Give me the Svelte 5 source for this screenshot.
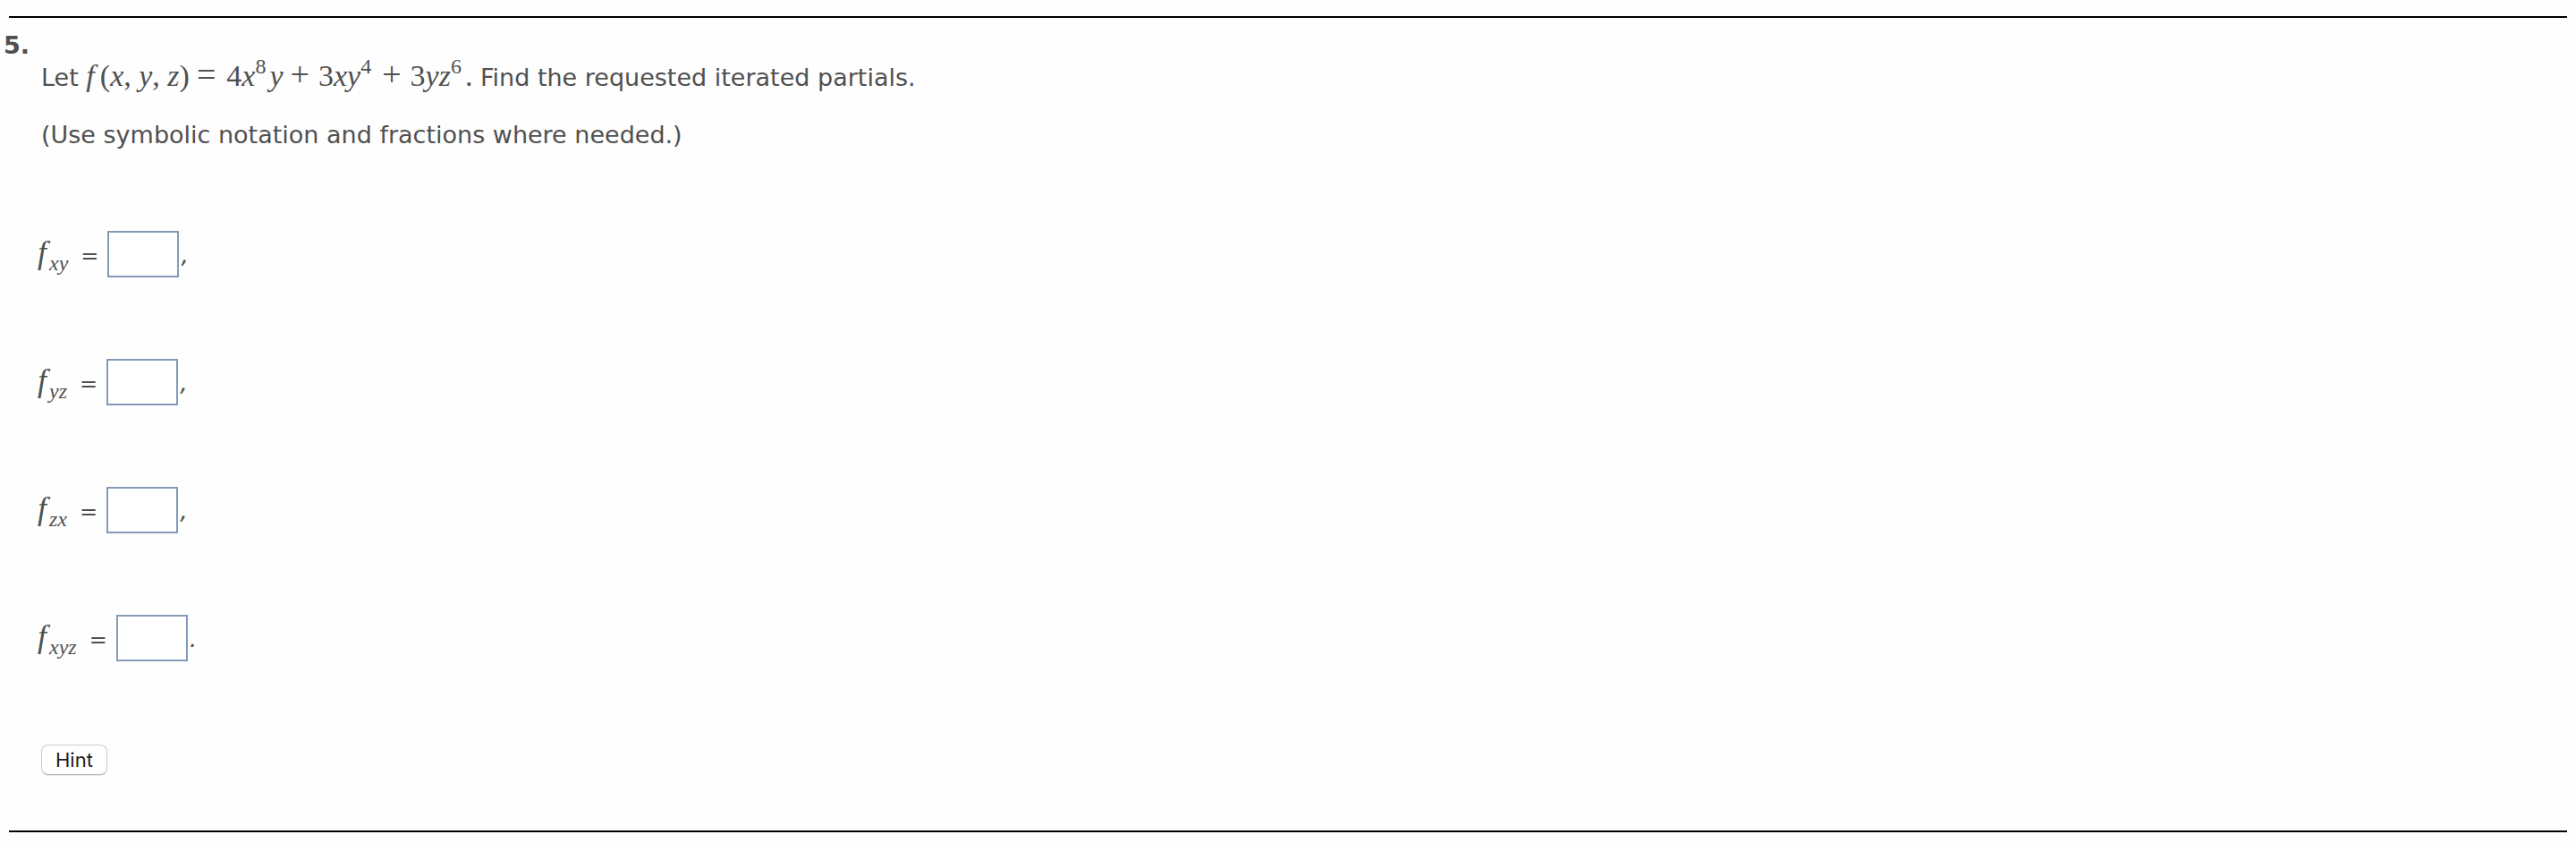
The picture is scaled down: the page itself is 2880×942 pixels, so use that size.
<script>
  let answers = $state([
    { id: 'fxy', sub: 'xy', end: ',', value: '' },
    { id: 'fyz', sub: 'yz', end: ',', value: '' },
    { id: 'fzx', sub: 'zx', end: ',', value: '' },
    { id: 'fxyz', sub: 'xyz', end: '.', value: '' }
  ]);
</script>

<main>
  <section class="question">
    <h2>5.</h2>
    <div class="content">
      <p class="prompt">
        Let <span class="math"><i class="fn">f</i><span class="args">(<i>x</i>, <i>y</i>, <i>z</i>)</span><span class="rel">=</span>4<i>x</i><sup>8</sup><i>y</i><span class="op">+</span>3<i>xy</i><sup>4</sup><span class="op">+</span>3<i>yz</i><sup>6</sup>.</span> Find the requested iterated partials.
      </p>
      <p class="note">(Use symbolic notation and fractions where needed.)</p>

      <div class="answers">
        {#each answers as answer}
          <div class="answer">
            <label for={answer.id}><i class="f">f</i><i class="sub">{answer.sub}</i><span class="eq">=</span></label>
            <input id={answer.id} type="text" bind:value={answer.value} />
            <em class="end">{answer.end}</em>
          </div>
        {/each}
      </div>

      <button type="button">Hint</button>
    </div>
  </section>
</main>

<style>
  :global(body) {
    margin: 0;
    background: #fefefe;
  }
  main {
    padding: 18px 10px 12px;
    font-family: Verdana, "DejaVu Sans", sans-serif;
    font-size: 27px;
    color: #505050;
  }
  .question {
    border-top: 2px solid #000;
    border-bottom: 2px solid #000;
    padding: 16px 0 62px;
  }
  h2 {
    margin: 0 0 3px -6px;
    font-size: 27px;
    line-height: 30px;
  }
  .content {
    padding-left: 36px;
  }
  p {
    margin: 0;
    line-height: 36px;
    white-space: nowrap;
  }
  .note {
    margin-top: 28px;
  }
  .math {
    font-family: "Liberation Serif", serif;
    font-size: 34px;
    line-height: 0;
  }
  .fn {
    margin-right: 6px;
  }
  .rel,
  .op {
    margin: 0 10px 0 8px;
    font-size: 38px;
  }
  .rel {
    margin-right: 12px;
  }
  sup {
    margin-right: 4px;
    font-size: 24px;
    line-height: 0;
    vertical-align: 14px;
  }
  .answers {
    display: flex;
    flex-direction: column;
    gap: 91px;
    margin: 89px 0 93px -4px;
  }
  .answer {
    display: flex;
    align-items: baseline;
    height: 52px;
  }
  label {
    white-space: nowrap;
  }
  .f,
  .sub {
    font-family: "Liberation Serif", serif;
    font-size: 36px;
    line-height: 40px;
  }
  .f {
    margin-right: 3px;
  }
  .sub {
    font-size: 24px;
    line-height: 0;
    vertical-align: -8px;
  }
  .eq {
    margin: 0 10px 0 14px;
    font-size: 24px;
  }
  input {
    box-sizing: border-box;
    width: 80px;
    height: 52px;
    padding: 0 6px;
    border: 2px solid #839bb9;
    border-radius: 0;
    background: #fff;
    color: inherit;
    font-family: inherit;
    font-size: 28px;
  }
  .end {
    margin-left: 2px;
  }
  button {
    display: block;
    height: 34px;
    padding: 0 15px;
    border: 1px solid #cdcdcd;
    border-bottom-color: #b8b8b8;
    border-radius: 8px;
    background: #fff;
    box-shadow: 0 1px 1px #e4e4e4;
    color: #222;
    font-family: Inter, sans-serif;
    font-size: 22px;
    line-height: 32px;
  }
</style>
